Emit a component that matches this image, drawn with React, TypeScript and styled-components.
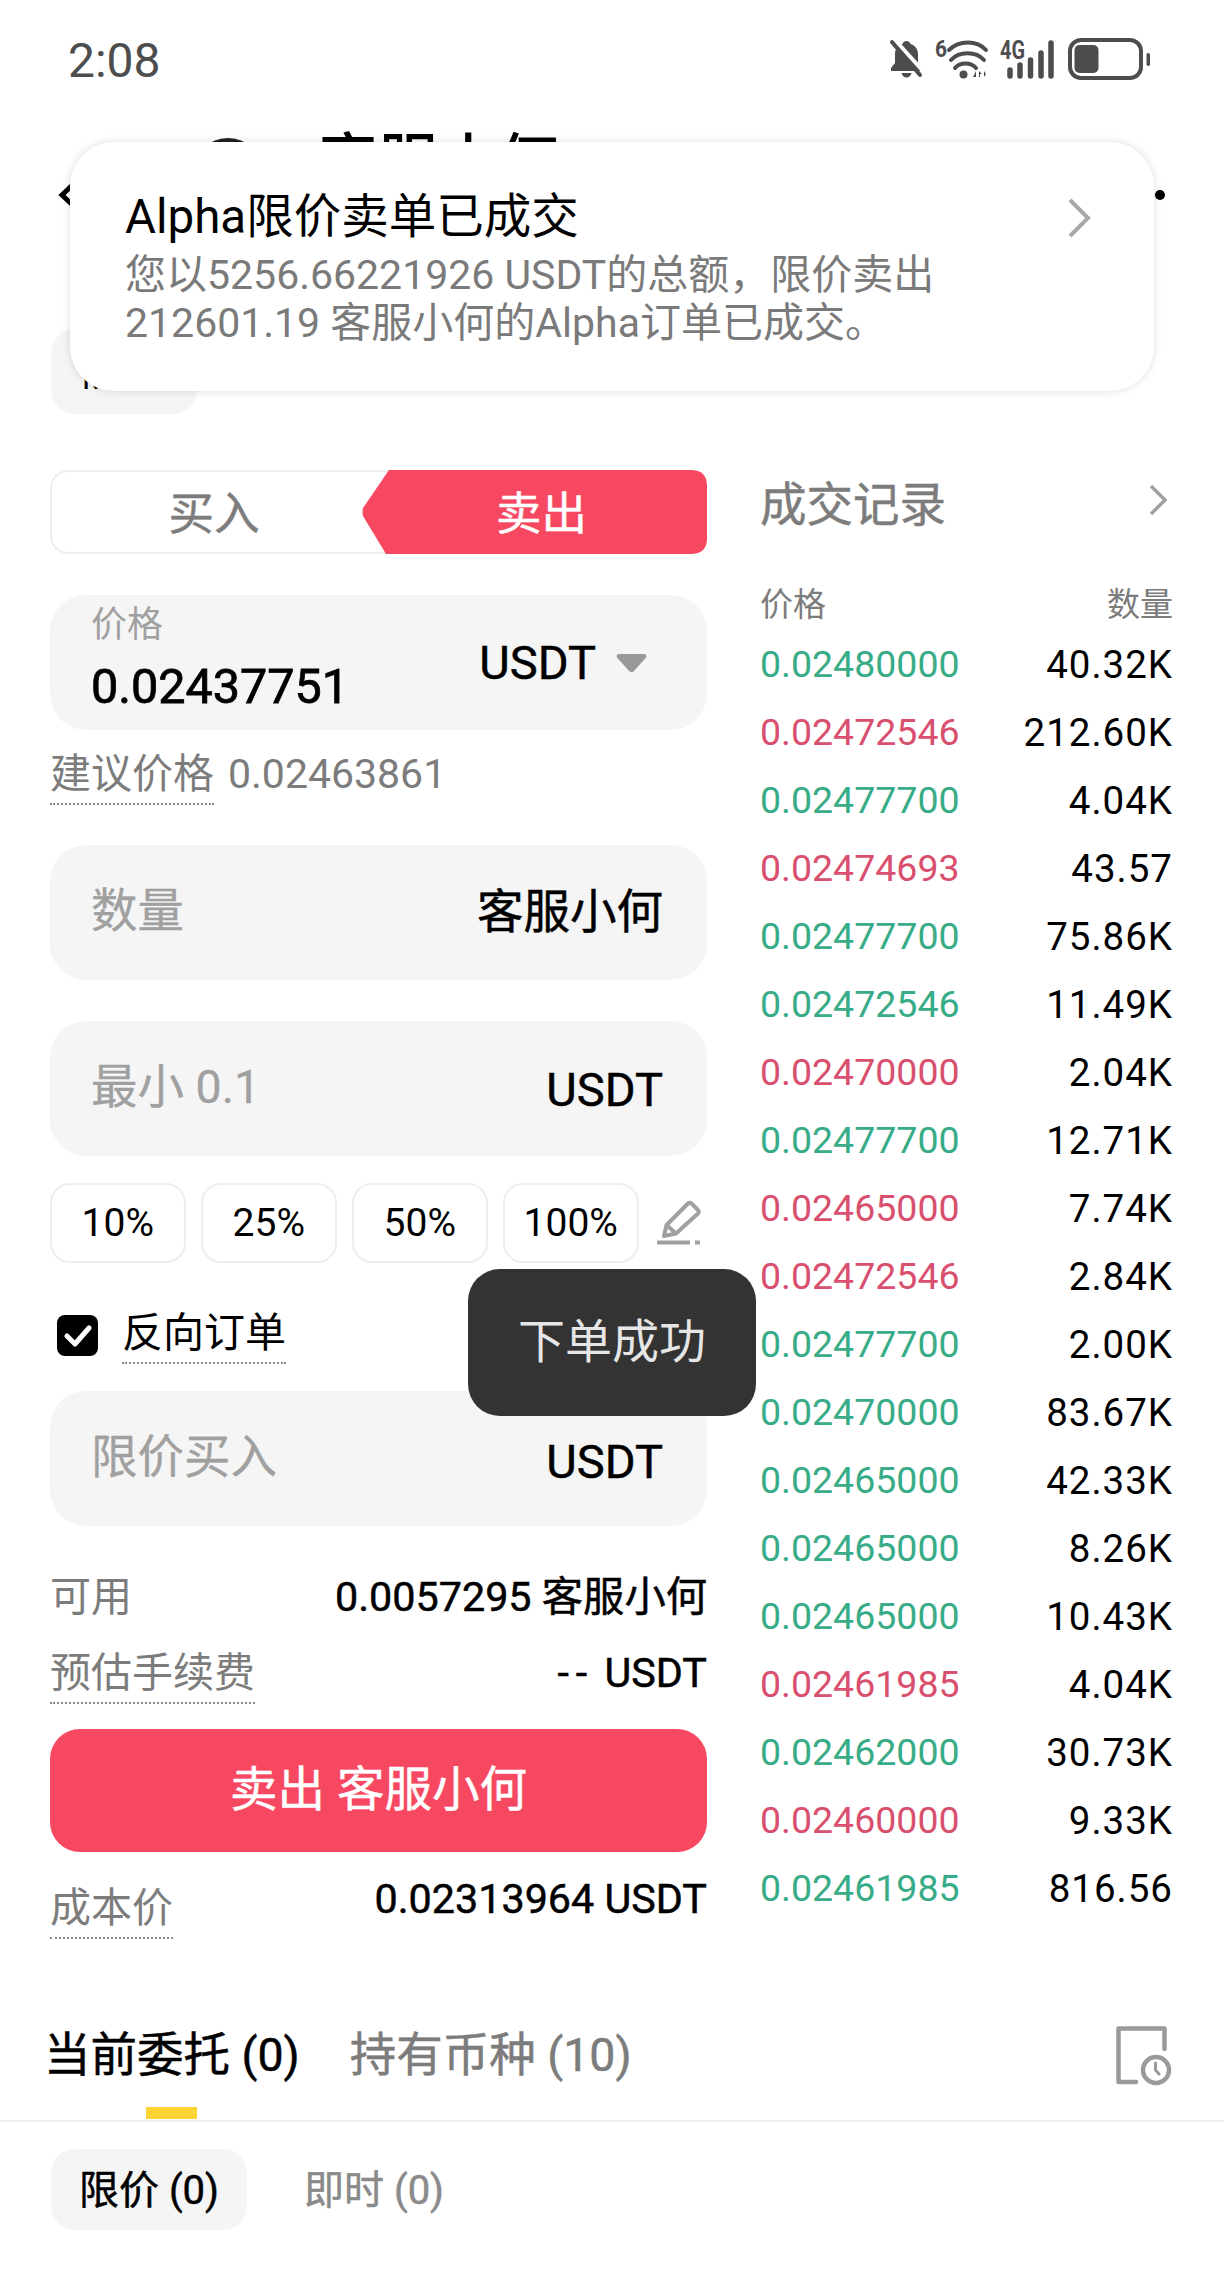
import React from "react";
import styled, { createGlobalStyle, css } from "styled-components";

const Global = createGlobalStyle`
  html, body { margin: 0; padding: 0; background: #fff; }
  * { box-sizing: border-box; }
`;

const medium = css`
  font-weight: 400;
  -webkit-text-stroke: 0.5px currentColor;
`;

const Page = styled.div`
  position: relative;
  width: 1224px;
  height: 2295px;
  overflow: hidden;
  background: #fff;
  color: #000;
  font-family: Roboto, "Noto Sans CJK SC", sans-serif;
`;

const StatusBar = styled.div`
  height: 118px;
  display: flex;
  align-items: center;
  justify-content: space-between;
  padding: 0 74px 0 68px;
`;
const Time = styled.span`
  font-size: 48px;
  color: #4d4d4d;
  line-height: 1;
  padding-top: 4px;
`;
const StatusIcons = styled.div`
  display: flex;
  align-items: center;
  gap: 12px;
`;
const StatusIcon = styled.svg`
  overflow: visible;
`;

const Header = styled.div`
  height: 154px;
  display: flex;
`;
const BackIcon = styled.svg`
  align-self: center;
  margin-left: 58px;
  width: 24px;
  height: 40px;
`;
const Logo = styled.div`
  width: 72px;
  height: 72px;
  border-radius: 50%;
  background: #222;
  margin: 20px 0 0 110px;
`;
const Title = styled.div`
  font-size: 60px;
  line-height: 80px;
  font-weight: 500;
  margin: 5px 0 0 54px;
`;
const MoreDot = styled.div`
  align-self: center;
  margin: 0 59px 0 auto;
  width: 10px;
  height: 10px;
  border-radius: 50%;
  background: #000;
`;

const ChipRow = styled.div`
  margin-top: 57px;
  padding-left: 51px;
`;
const Chip = styled.div`
  width: 146px;
  height: 85px;
  border-radius: 24px;
  background: #f5f5f5;
  padding: 29px 0 0 31px;
  font-size: 32px;
  line-height: 40px;
`;

const Main = styled.div`
  margin-top: 56px;
  padding: 0 51px 0 50px;
  display: grid;
  grid-template-columns: 657px 413px;
  column-gap: 53px;
`;
const LeftCol = styled.div`
  display: flex;
  flex-direction: column;
`;
const RightCol = styled.div`
  display: flex;
  flex-direction: column;
`;

const Toggle = styled.div`
  height: 84px;
  border: 2px solid #eeeeee;
  border-radius: 18px;
  display: flex;
`;
const BuySeg = styled.div`
  flex: 1;
  display: flex;
  align-items: center;
  justify-content: center;
  padding: 0 0 5px 14px;
  font-size: 45.500px;
  color: #7c7c7c;
  ${medium}
`;
const SellSeg = styled.div`
  flex: 0 0 345px;
  height: 84px;
  margin: -2px -2px -2px 0;
  background: #f74862;
  color: #fff;
  font-size: 45.500px;
  display: flex;
  align-items: center;
  justify-content: center;
  padding: 0 0 5px 14px;
  clip-path: path("M27 0 H329 Q345 0 345 16 V68 Q345 84 329 84 H24 L1 46 Q0 42 1 38 Z");
  ${medium}
`;

const Field = styled.div<{ $mt: number }>`
  height: 135px;
  margin-top: ${(p) => p.$mt}px;
  border-radius: 36px;
  background: #f5f5f5;
  padding: 0 44px 0 41px;
  display: flex;
  align-items: center;
  justify-content: space-between;
`;
const Placeholder = styled.span`
  font-size: 46.500px;
  color: #a0a0a0;
  margin-bottom: 12px;
  -webkit-text-stroke: 0.3px currentColor;
`;
const Unit = styled.span<{ $up?: number; $down?: number }>`
  font-size: 47px;
  color: #000;
  margin-bottom: ${(p) => p.$up ?? 0}px;
  margin-top: ${(p) => p.$down ?? 0}px;
  ${medium}
`;
const CoinUnit = styled(Unit)`
  font-size: 46.500px;
`;
const PriceCol = styled.div`
  align-self: flex-start;
  padding-top: 8px;
  display: flex;
  flex-direction: column;
  gap: 12px;
`;
const PriceLabel = styled.span`
  font-size: 36px;
  line-height: 44px;
  color: #a0a0a0;
`;
const PriceValue = styled.span`
  font-size: 48.500px;
  line-height: 56px;
  font-weight: 400;
  -webkit-text-stroke: 0.8px currentColor;
`;
const UnitSelect = styled.div`
  display: flex;
  align-items: center;
  gap: 20px;
  margin-right: 16px;
`;

const HintRow = styled.div`
  margin-top: 20px;
  display: flex;
  align-items: flex-start;
  gap: 14px;
`;
const Dotted = styled.span<{ $dark?: boolean }>`
  display: inline-block;
  font-size: 41px;
  line-height: 48px;
  padding-bottom: 5px;
  color: ${(p) => (p.$dark ? "#000" : "#7c7c7c")};
  border-bottom: 2px dotted #8a8a8a;
`;
const HintValue = styled.span`
  font-size: 41px;
  line-height: 48px;
  color: #7c7c7c;
`;

const PctRow = styled.div`
  margin-top: 27px;
  display: flex;
  align-items: center;
  gap: 15.500px;
`;
const Pct = styled.div`
  width: 135.500px;
  height: 80px;
  border: 2px solid #eeeeee;
  border-radius: 20px;
  display: flex;
  align-items: center;
  justify-content: center;
  font-size: 39px;
`;
const PencilIcon = styled.svg`
  width: 46px;
  height: 46px;
  margin-left: 3px;
`;

const CheckRow = styled.div`
  margin-top: 46px;
  padding-left: 7px;
  display: flex;
  align-items: flex-start;
  gap: 24px;
`;
const CheckBox = styled.div`
  width: 41px;
  height: 41px;
  margin-top: 6px;
  border-radius: 8px;
  background: #000;
  display: flex;
  align-items: center;
  justify-content: center;
`;

const InfoRow = styled.div<{ $mt: number }>`
  margin-top: ${(p) => p.$mt}px;
  display: flex;
  align-items: flex-start;
  justify-content: space-between;
`;
const InfoLabel = styled.span`
  font-size: 41px;
  line-height: 48px;
  color: #7c7c7c;
`;
const InfoValue = styled.span<{ $lh?: number }>`
  font-size: 41.300px;
  line-height: ${(p) => p.$lh ?? 48}px;
  ${medium}
`;
const Dashes = styled.span`
  letter-spacing: 7px;
`;

const SubmitButton = styled.div`
  height: 123px;
  margin-top: 25px;
  padding-bottom: 10px;
  border-radius: 30px;
  background: #f74862;
  color: #fff;
  font-size: 47.500px;
  display: flex;
  align-items: center;
  justify-content: center;
  ${medium}
`;

const TradesHead = styled.div`
  height: 66px;
  display: flex;
  align-items: center;
  justify-content: space-between;
  padding: 0 6px 6px 0;
  font-size: 46.500px;
  color: #7c7c7c;
  ${medium}
`;
const ColHead = styled.div`
  margin: 42px 0 2px;
  height: 50px;
  padding-bottom: 2px;
  display: flex;
  align-items: center;
  justify-content: space-between;
  font-size: 33px;
  color: #7c7c7c;
`;
const TradeRow = styled.div`
  height: 68px;
  display: flex;
  align-items: center;
  justify-content: space-between;
`;
const TradePrice = styled.span<{ $up: boolean }>`
  font-size: 37.500px;
  color: ${(p) => (p.$up ? "#38ab87" : "#d9506e")};
`;
const TradeQty = styled.span`
  font-size: 38.500px;
  letter-spacing: 1px;
`;

const TabBar = styled.div`
  margin-top: 60px;
  height: 123px;
  padding: 0 52px 0 44px;
  border-bottom: 2px solid #eeeeee;
  display: flex;
  align-items: flex-start;
  gap: 50px;
`;
const Tab = styled.div<{ $active?: boolean }>`
  position: relative;
  height: 121px;
  padding-bottom: 19px;
  display: flex;
  align-items: center;
  font-size: 46.500px;
  color: ${(p) => (p.$active ? "#000" : "#7c7c7c")};
  ${medium}
  ${(p) =>
    p.$active &&
    `&::after {
      content: "";
      position: absolute;
      left: 102px;
      bottom: 1px;
      width: 51px;
      height: 12px;
      background: #fcd535;
    }`}
`;
const HistoryIcon = styled.svg`
  margin: 27px 0 0 auto;
  width: 56px;
  height: 60px;
`;

const SubTabs = styled.div`
  margin-top: 27px;
  padding-left: 51px;
  display: flex;
  gap: 29px;
`;
const SubTab = styled.div<{ $active?: boolean }>`
  height: 81px;
  padding: 0 28px 6px;
  border-radius: 24px;
  display: flex;
  align-items: center;
  font-size: 40px;
  background: ${(p) => (p.$active ? "#f5f5f5" : "transparent")};
  color: ${(p) => (p.$active ? "#000" : "#8a8a8a")};
  ${medium}
`;

const Notice = styled.div`
  position: absolute;
  left: 70px;
  top: 142px;
  width: 1084px;
  height: 249px;
  padding: 45px 63px 0 55px;
  border-radius: 44px;
  background: #fff;
  box-shadow: 0 0 8px rgba(0, 0, 0, 0.14);
  display: flex;
  justify-content: space-between;
  align-items: flex-start;
`;
const NoticeTitle = styled.div`
  font-size: 47.500px;
  line-height: 60px;
`;
const NoticeBody = styled.div`
  margin-top: 4px;
  font-size: 41px;
  line-height: 48px;
  color: #7a7a7a;
`;
const NoticeChevron = styled.svg`
  margin-top: 11px;
  width: 24px;
  height: 40px;
`;

const Toast = styled.div`
  position: absolute;
  left: 468px;
  top: 1269px;
  width: 288px;
  height: 147px;
  padding-bottom: 10px;
  border-radius: 32px;
  background: #333333;
  color: #e6e6e6;
  font-size: 47px;
  display: flex;
  align-items: center;
  justify-content: center;
`;

const trades: [string, string, boolean][] = [
  ["0.02480000", "40.32K", true],
  ["0.02472546", "212.60K", false],
  ["0.02477700", "4.04K", true],
  ["0.02474693", "43.57", false],
  ["0.02477700", "75.86K", true],
  ["0.02472546", "11.49K", true],
  ["0.02470000", "2.04K", false],
  ["0.02477700", "12.71K", true],
  ["0.02465000", "7.74K", false],
  ["0.02472546", "2.84K", false],
  ["0.02477700", "2.00K", true],
  ["0.02470000", "83.67K", true],
  ["0.02465000", "42.33K", true],
  ["0.02465000", "8.26K", true],
  ["0.02465000", "10.43K", true],
  ["0.02461985", "4.04K", false],
  ["0.02462000", "30.73K", true],
  ["0.02460000", "9.33K", false],
  ["0.02461985", "816.56", true],
];

const ICON = "#4d4d4d";

export default function App() {
  return (
    <Page>
      <Global />
      <StatusBar>
        <Time>2:08</Time>
        <StatusIcons>
          <StatusIcon width="33" height="38" viewBox="0 0 33 38">
            <path d="M16.500 1c-2 0-3.500 1.200-4 3C7.500 5.500 5 9.500 5 14v9L1 28v3h31v-3l-4-5v-9c0-4.500-2.500-8.500-7.500-10-.5-1.800-2-3-4-3z" fill={ICON} />
            <path d="M11.500 33c.6 2.500 2.600 4.500 5 4.500s4.400-2 5-4.500z" fill={ICON} />
            <path d="M5 0l28 31" stroke="#fff" strokeWidth="4" />
            <path d="M2 2l28 33" stroke={ICON} strokeWidth="4" strokeLinecap="round" />
          </StatusIcon>
          <StatusIcon width="53" height="40" viewBox="0 0 53 40">
            <text x="0" y="18" fontFamily="Roboto, sans-serif" fontWeight="700" fontSize="23" textLength="12" lengthAdjust="spacingAndGlyphs" fill={ICON}>6</text>
            <g fill="none" stroke={ICON} strokeWidth="4" strokeLinecap="round">
              <path d="M14 11C24 1 42 1 51 11" />
              <path d="M16 21C24 12 41 12 49 21" />
              <path d="M20 29c5-6 16-6 21 0" />
            </g>
            <circle cx="28.500" cy="35.500" r="4" fill={ICON} />
            <path d="M38 38l3-6v6zM44 32l3 3h-2v3h-1zM49 32v6l2-3z" fill={ICON} />
          </StatusIcon>
          <StatusIcon width="56" height="40" viewBox="0 0 56 40">
            <text x="0" y="20" fontFamily="Roboto, sans-serif" fontWeight="700" fontSize="25" textLength="25" lengthAdjust="spacingAndGlyphs" fill={ICON}>4G</text>
            <g stroke={ICON} strokeWidth="5.500" strokeLinecap="round">
              <path d="M10 31v6" />
              <path d="M20 26v11" />
              <path d="M30.500 21v16" />
              <path d="M41 14v23" />
              <path d="M51 4v33" />
            </g>
          </StatusIcon>
          <StatusIcon width="82" height="42" viewBox="0 0 82 42">
            <rect x="2" y="2" width="71" height="38" rx="11" fill="none" stroke={ICON} strokeWidth="4" />
            <rect x="6.500" y="7" width="24" height="28" rx="5" fill={ICON} />
            <rect x="78.500" y="15" width="3.500" height="13" rx="1.700" fill={ICON} />
          </StatusIcon>
        </StatusIcons>
      </StatusBar>

      <Header>
        <BackIcon viewBox="0 0 24 40">
          <path d="M22 3L4 20l18 17" fill="none" stroke="#000" strokeWidth="5" />
        </BackIcon>
        <Logo />
        <Title>客服小何</Title>
        <MoreDot />
      </Header>

      <ChipRow>
        <Chip>Meme</Chip>
      </ChipRow>

      <Main>
        <LeftCol>
          <Toggle>
            <BuySeg>买入</BuySeg>
            <SellSeg>卖出</SellSeg>
          </Toggle>

          <Field $mt={41}>
            <PriceCol>
              <PriceLabel>价格</PriceLabel>
              <PriceValue>0.02437751</PriceValue>
            </PriceCol>
            <UnitSelect>
              <Unit>USDT</Unit>
              <svg width="31" height="20" viewBox="0 0 31 20">
                <path d="M3 1h25c2 0 3 2 2 3.500L17.500 18.500c-1 1-3 1-4 0L1 4.500C0 3 1 1 3 1z" fill="#999" />
              </svg>
            </UnitSelect>
          </Field>

          <HintRow>
            <Dotted>建议价格</Dotted>
            <HintValue>0.02463861</HintValue>
          </HintRow>

          <Field $mt={40}>
            <Placeholder>数量</Placeholder>
            <CoinUnit $up={10}>客服小何</CoinUnit>
          </Field>

          <Field $mt={41}>
            <Placeholder>最小 0.1</Placeholder>
            <Unit $down={2}>USDT</Unit>
          </Field>

          <PctRow>
            <Pct>10%</Pct>
            <Pct>25%</Pct>
            <Pct>50%</Pct>
            <Pct>100%</Pct>
            <PencilIcon viewBox="0 0 46 46">
              <path d="M7 36l2.500-11L31 3.500a2.500 2.500 0 0 1 3.500 0l6.500 6.500a2.500 2.500 0 0 1 0 3.500L19 33.500z" fill="none" stroke="#a0a0a0" strokeWidth="4" strokeLinejoin="round" />
              <path d="M9.500 25l9.500 8.500" stroke="#a0a0a0" strokeWidth="4" />
              <path d="M0 42.500h33M38 42.500h5" stroke="#a0a0a0" strokeWidth="4" />
            </PencilIcon>
          </PctRow>

          <CheckRow>
            <CheckBox>
              <svg width="28" height="24" viewBox="0 0 28 24">
                <path d="M3 12l8 8L25 4" fill="none" stroke="#fff" strokeWidth="5" strokeLinecap="round" strokeLinejoin="round" />
              </svg>
            </CheckBox>
            <Dotted $dark>反向订单</Dotted>
          </CheckRow>

          <Field $mt={27}>
            <Placeholder>限价买入</Placeholder>
            <Unit $down={6}>USDT</Unit>
          </Field>

          <InfoRow $mt={47}>
            <InfoLabel>可用</InfoLabel>
            <InfoValue>0.0057295 客服小何</InfoValue>
          </InfoRow>
          <InfoRow $mt={28}>
            <Dotted>预估手续费</Dotted>
            <InfoValue>
              <Dashes>--</Dashes> USDT
            </InfoValue>
          </InfoRow>

          <SubmitButton>卖出 客服小何</SubmitButton>

          <InfoRow $mt={32}>
            <Dotted>成本价</Dotted>
            <InfoValue $lh={30}>0.02313964 USDT</InfoValue>
          </InfoRow>
        </LeftCol>

        <RightCol>
          <TradesHead>
            成交记录
            <svg width="18" height="32" viewBox="0 0 18 32">
              <path d="M2 2l14 14L2 30" fill="none" stroke="#a0a0a0" strokeWidth="3.500" />
            </svg>
          </TradesHead>
          <ColHead>
            <span>价格</span>
            <span>数量</span>
          </ColHead>
          {trades.map(([price, qty, up], i) => (
            <TradeRow key={i}>
              <TradePrice $up={up}>{price}</TradePrice>
              <TradeQty>{qty}</TradeQty>
            </TradeRow>
          ))}
        </RightCol>
      </Main>

      <TabBar>
        <Tab $active>当前委托 (0)</Tab>
        <Tab>持有币种 (10)</Tab>
        <HistoryIcon viewBox="0 0 56 60">
          <path d="M20 56H2.500V2.500h46V23" fill="none" stroke="#9a9a9a" strokeWidth="4.500" strokeLinecap="round" strokeLinejoin="round" />
          <circle cx="40" cy="44" r="13" fill="none" stroke="#9a9a9a" strokeWidth="4.500" />
          <path d="M39.500 37v7l3.500 4" fill="none" stroke="#9a9a9a" strokeWidth="3" strokeLinecap="round" />
        </HistoryIcon>
      </TabBar>

      <SubTabs>
        <SubTab $active>限价 (0)</SubTab>
        <SubTab>即时 (0)</SubTab>
      </SubTabs>

      <Notice>
        <div>
          <NoticeTitle>Alpha限价卖单已成交</NoticeTitle>
          <NoticeBody>
            您以5256.66221926 USDT的总额，限价卖出
            <br />
            212601.19 客服小何的Alpha订单已成交。
          </NoticeBody>
        </div>
        <NoticeChevron viewBox="0 0 24 40">
          <path d="M3 2l18 18L3 38" fill="none" stroke="#a8a8a8" strokeWidth="4" />
        </NoticeChevron>
      </Notice>

      <Toast>下单成功</Toast>
    </Page>
  );
}
